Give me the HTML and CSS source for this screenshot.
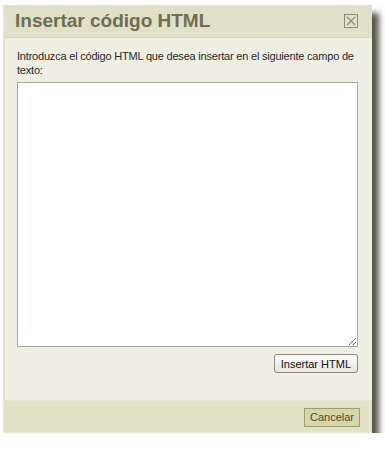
FILE: index.html
```html
<!DOCTYPE html>
<html lang="es">
<head>
<meta charset="utf-8">
<title>Insertar código HTML</title>
<link rel="stylesheet" href="styles.css">
</head>
<body>
<div class="dialog">
  <div class="titlebar">
    <span class="title">Insertar código HTML</span>
    <span class="close" aria-label="Cerrar">
      <svg width="14" height="14" viewBox="0 0 14 14"><rect x="0.5" y="0.5" width="13" height="13" fill="none" stroke="#8c8c7c"/><path d="M3 3L11 11M11 3L3 11" stroke="#8c8c7c" stroke-width="1.1"/></svg>
    </span>
  </div>
  <div class="body">
    <p class="intro">Introduzca el código HTML que desea insertar en el siguiente campo de texto:</p>
    <textarea class="code"></textarea>
    <div class="actions">
      <button class="btn">Insertar HTML</button>
    </div>
  </div>
  <div class="footer">
    <button class="cancel">Cancelar</button>
  </div>
</div>
</body>
</html>
```
FILE: styles.css
```css
html, body {
  margin: 0;
  padding: 0;
  background: #ffffff;
}
body {
  padding: 5px 0 0 3px;
  font-family: "Liberation Sans", Arial, sans-serif;
}
.dialog {
  width: 369px;
  background: #eeeee2;
  border-left: 2px solid #e4e4cc;
  box-sizing: border-box;
  box-shadow: 7px 8px 6px rgba(55, 55, 38, 0.85);
  display: flex;
  flex-direction: column;
}
.titlebar {
  height: 32px;
  background: #e0e0c8;
  display: flex;
  align-items: center;
  justify-content: space-between;
  padding: 0 14px 0 10px;
  border-bottom: 1px solid #d6d6bc;
}
.title {
  font-size: 19px;
  font-weight: bold;
  color: #6e6e52;
}
.close {
  display: flex;
  width: 14px;
  height: 14px;
}
.body {
  padding: 11px 12px 0 12px;
  display: flex;
  flex-direction: column;
  height: 362px;
  box-sizing: border-box;
}
.intro {
  margin: 0;
  font-size: 11px;
  line-height: 14px;
  letter-spacing: -0.2px;
  color: #2a2a2a;
}
.code {
  margin: 5px 0 0 0;
  width: 341px;
  height: 265px;
  box-sizing: border-box;
  border: 1px solid #a8a89c;
  background: #fff;
  resize: both;
}
.actions {
  display: flex;
  justify-content: flex-end;
  padding: 7px 2px 0 0;
}
.btn {
  font-family: "Liberation Sans", Arial, sans-serif;
  font-size: 11px;
  height: 19px;
  padding: 0 6px;
  border: 1px solid #8a8a80;
  border-radius: 3px;
  background: linear-gradient(#fbfbf8, #e6e6df);
  color: #111;
}
.footer {
  height: 32px;
  background: #e2e2c6;
  display: flex;
  align-items: center;
  justify-content: flex-end;
  padding: 0 12px;
  border-top: 1px solid #e8e8d8;
}
.cancel {
  font-family: "Liberation Sans", Arial, sans-serif;
  font-size: 11px;
  height: 19px;
  padding: 0 5px;
  border: 1px solid #9c9c74;
  background: #d6d6a8;
  color: #4a4a3a;
}
```
